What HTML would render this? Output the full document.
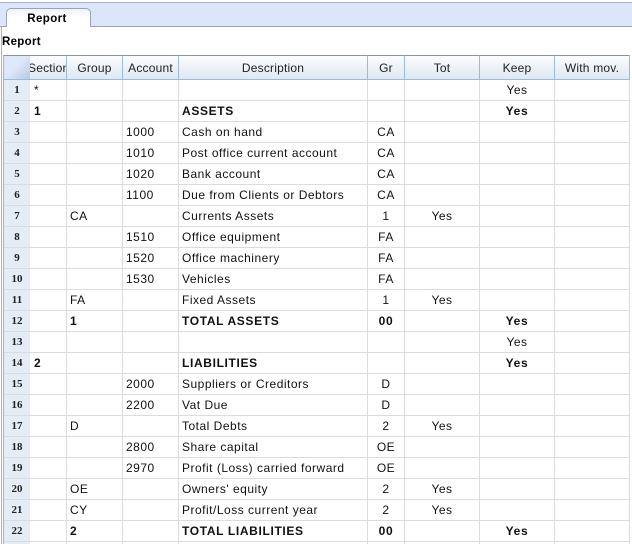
<!DOCTYPE html>
<html style="width:632px;height:544px;overflow:hidden"><head><meta charset="utf-8"><style>
html,body{margin:0;padding:0;background:#fff}
body{width:632px;height:544px;overflow:hidden;position:relative;font-family:"Liberation Sans",sans-serif;color:#000}
#w{position:absolute;left:0;top:0;width:632px;height:544px;overflow:hidden;contain:paint}
.bar{position:absolute;left:0;top:2px;width:632px;box-sizing:border-box;height:25px;background:#dde5fa;border-top:1px solid #a9b2c6;border-bottom:1px solid #9ba3b5}
.side{position:absolute;left:1px;top:26px;width:1px;height:518px;background:#a9b2c6}
.vl{position:absolute;left:3px;top:55px;width:1px;height:489px;background:#a4b4c8}
.tab{position:absolute;left:6px;top:8px;width:85px;height:19px;box-sizing:border-box;background:linear-gradient(#eef2fc,#fff 45%);border:1px solid #9ba3b5;border-bottom:0;border-radius:5px 5px 0 0;font:bold 11.5px/21px "Liberation Sans",sans-serif;letter-spacing:.4px;text-align:center;padding-right:3px}
.ttl{position:absolute;left:2px;top:36px;font:bold 11.5px/13px "Liberation Sans",sans-serif;letter-spacing:.3px}
table{position:absolute;left:4px;top:55px;border-collapse:separate;border-spacing:0;table-layout:fixed;width:626px;font-size:12px;letter-spacing:.5px}
th{height:25px;box-sizing:border-box;border-top:1px solid #8b93a3;border-bottom:1px solid #9dbbd8;border-right:1px solid #9dbbd8;background:linear-gradient(#fbfcfe,#dfe8f3);font-weight:normal;font-size:12px;letter-spacing:.2px;padding:0;overflow:hidden;white-space:nowrap;color:#222}
th.c{background:linear-gradient(135deg,#dfe7fb 45%,#b9c8dd);border-right:0}
td{height:21px;box-sizing:border-box;border-bottom:1px solid #dcdcdc;border-right:1px solid #dcdcdc;padding:0 0 0 3px;white-space:nowrap;overflow:hidden;color:#111}
td.n{background:#e4edf6;border-right:0;padding:0;text-align:center;font:bold 11px "Liberation Serif",serif;letter-spacing:0;color:#222}
td.m{text-align:center;padding:0}
tr.b td{font-weight:bold;letter-spacing:.65px}
tr.b td.n{font:bold 11px "Liberation Serif",serif;letter-spacing:0}
.s{padding-left:4px}
</style></head><body><div id="w">
<div class="bar"></div><div class="side"></div><div class="vl"></div>
<div class="tab">Report</div>
<div class="ttl">Report</div>
<table>
<colgroup><col style="width:26px"><col style="width:37px"><col style="width:56px"><col style="width:56px"><col style="width:189px"><col style="width:37px"><col style="width:75px"><col style="width:75px"><col style="width:75px"></colgroup>
<tr><th class="c"></th><th style="text-align:left;text-indent:-2px">Section</th><th>Group</th><th>Account</th><th>Description</th><th>Gr</th><th>Tot</th><th>Keep</th><th>With mov.</th></tr>
<tr><td class="n">1</td><td class="s">*</td><td></td><td></td><td></td><td class="m"></td><td class="m"></td><td class="m">Yes</td><td></td></tr>
<tr class="b"><td class="n">2</td><td class="s">1</td><td></td><td></td><td>ASSETS</td><td class="m"></td><td class="m"></td><td class="m">Yes</td><td></td></tr>
<tr><td class="n">3</td><td></td><td></td><td>1000</td><td>Cash on hand</td><td class="m">CA</td><td class="m"></td><td class="m"></td><td></td></tr>
<tr><td class="n">4</td><td></td><td></td><td>1010</td><td>Post office current account</td><td class="m">CA</td><td class="m"></td><td class="m"></td><td></td></tr>
<tr><td class="n">5</td><td></td><td></td><td>1020</td><td>Bank account</td><td class="m">CA</td><td class="m"></td><td class="m"></td><td></td></tr>
<tr><td class="n">6</td><td></td><td></td><td>1100</td><td>Due from Clients or Debtors</td><td class="m">CA</td><td class="m"></td><td class="m"></td><td></td></tr>
<tr><td class="n">7</td><td></td><td>CA</td><td></td><td>Currents Assets</td><td class="m">1</td><td class="m">Yes</td><td class="m"></td><td></td></tr>
<tr><td class="n">8</td><td></td><td></td><td>1510</td><td>Office equipment</td><td class="m">FA</td><td class="m"></td><td class="m"></td><td></td></tr>
<tr><td class="n">9</td><td></td><td></td><td>1520</td><td>Office machinery</td><td class="m">FA</td><td class="m"></td><td class="m"></td><td></td></tr>
<tr><td class="n">10</td><td></td><td></td><td>1530</td><td>Vehicles</td><td class="m">FA</td><td class="m"></td><td class="m"></td><td></td></tr>
<tr><td class="n">11</td><td></td><td>FA</td><td></td><td>Fixed Assets</td><td class="m">1</td><td class="m">Yes</td><td class="m"></td><td></td></tr>
<tr class="b"><td class="n">12</td><td></td><td>1</td><td></td><td>TOTAL ASSETS</td><td class="m">00</td><td class="m"></td><td class="m">Yes</td><td></td></tr>
<tr><td class="n">13</td><td></td><td></td><td></td><td></td><td class="m"></td><td class="m"></td><td class="m">Yes</td><td></td></tr>
<tr class="b"><td class="n">14</td><td class="s">2</td><td></td><td></td><td>LIABILITIES</td><td class="m"></td><td class="m"></td><td class="m">Yes</td><td></td></tr>
<tr><td class="n">15</td><td></td><td></td><td>2000</td><td>Suppliers or Creditors</td><td class="m">D</td><td class="m"></td><td class="m"></td><td></td></tr>
<tr><td class="n">16</td><td></td><td></td><td>2200</td><td>Vat Due</td><td class="m">D</td><td class="m"></td><td class="m"></td><td></td></tr>
<tr><td class="n">17</td><td></td><td>D</td><td></td><td>Total Debts</td><td class="m">2</td><td class="m">Yes</td><td class="m"></td><td></td></tr>
<tr><td class="n">18</td><td></td><td></td><td>2800</td><td>Share capital</td><td class="m">OE</td><td class="m"></td><td class="m"></td><td></td></tr>
<tr><td class="n">19</td><td></td><td></td><td>2970</td><td>Profit (Loss) carried forward</td><td class="m">OE</td><td class="m"></td><td class="m"></td><td></td></tr>
<tr><td class="n">20</td><td></td><td>OE</td><td></td><td>Owners' equity</td><td class="m">2</td><td class="m">Yes</td><td class="m"></td><td></td></tr>
<tr><td class="n">21</td><td></td><td>CY</td><td></td><td>Profit/Loss current year</td><td class="m">2</td><td class="m">Yes</td><td class="m"></td><td></td></tr>
<tr class="b"><td class="n">22</td><td></td><td>2</td><td></td><td>TOTAL LIABILITIES</td><td class="m">00</td><td class="m"></td><td class="m">Yes</td><td></td></tr>
<tr><td class="n"></td><td></td><td></td><td></td><td></td><td class="m"></td><td class="m"></td><td class="m"></td><td></td></tr>
</table>
</div></body></html>
